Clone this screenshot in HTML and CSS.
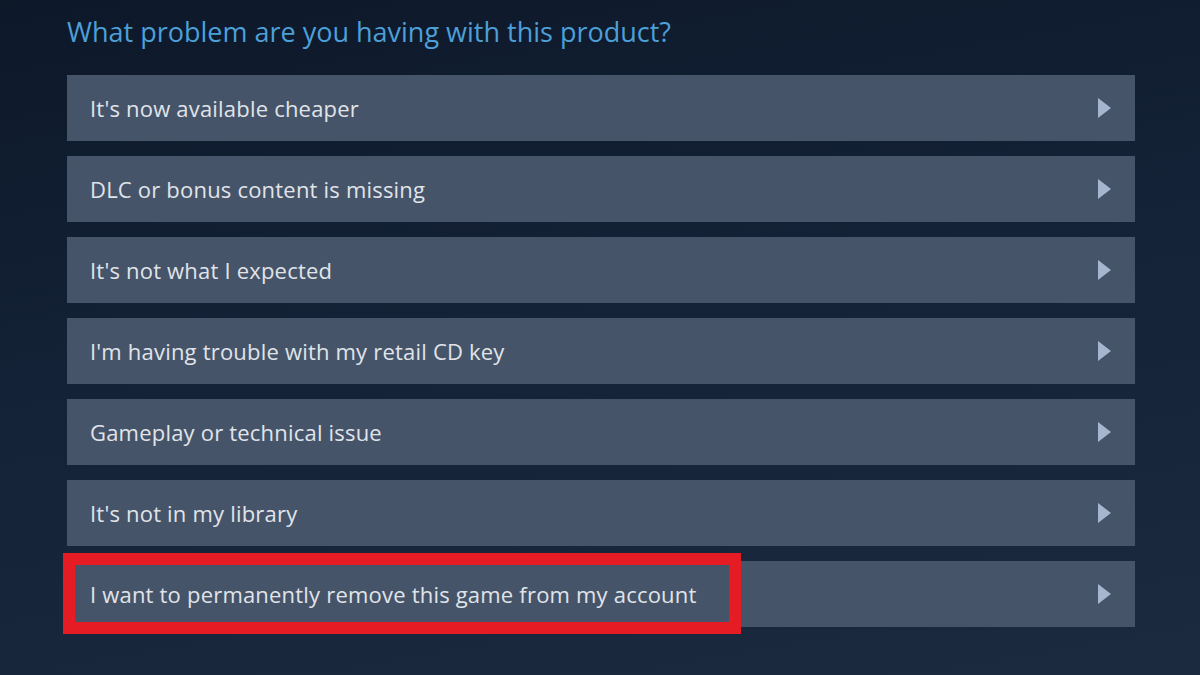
FILE: index.html
```html
<!DOCTYPE html>
<html lang="en">
<head>
  <meta charset="UTF-8">
  <title>Steam Support - Refund</title>
  <link rel="stylesheet" href="styles.css">
</head>
<body>
  <div class="support">
    <h2 class="support-title">What problem are you having with this product?</h2>
    <div class="options">
      <a class="option" href="#">It's now available cheaper<span class="arrow"></span></a>
      <a class="option" href="#">DLC or bonus content is missing<span class="arrow"></span></a>
      <a class="option" href="#">It's not what I expected<span class="arrow"></span></a>
      <a class="option" href="#">I'm having trouble with my retail CD key<span class="arrow"></span></a>
      <a class="option" href="#">Gameplay or technical issue<span class="arrow"></span></a>
      <a class="option" href="#">It's not in my library<span class="arrow"></span></a>
      <a class="option" href="#">I want to permanently remove this game from my account<span class="arrow"></span><span class="mark"></span></a>
    </div>
  </div>
</body>
</html>
```

FILE: styles.css
```css
body {
  margin: 0;
  min-height: 675px;
  font-family: "Open Sans", "Noto Sans", Arial, sans-serif;
  background: linear-gradient(170deg, #0d1829 0%, #142237 45%, #1b2a3e 100%);
  color: #dfe3e8;
}

.support {
  width: 1068px;
  margin-left: 67px;
  padding-top: 14px;
}

.support-title {
  margin: 0 0 25px 0;
  font-size: 27px;
  font-weight: 400;
  line-height: 36px;
  color: #4d9fd8;
}

.options {
  display: flex;
  flex-direction: column;
  gap: 15px;
}

.option {
  position: relative;
  display: flex;
  align-items: center;
  justify-content: space-between;
  height: 66px;
  padding: 0 23px;
  background: #465469;
  color: #e0e4e9;
  font-size: 22px;
  letter-spacing: 0.2px;
  text-decoration: none;
}

.arrow {
  width: 0;
  height: 0;
  margin-right: 1px;
  border-top: 10px solid transparent;
  border-bottom: 10px solid transparent;
  border-left: 13px solid #a6b6cf;
}

/* red highlight box over the last option */
.mark {
  position: absolute;
  left: -4px;
  top: -8px;
  width: 654px;
  height: 57px;
  border: 12px solid #e51c23;
}
```
